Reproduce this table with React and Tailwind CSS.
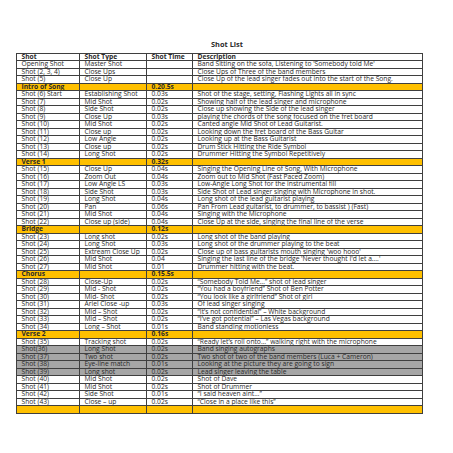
const rows = [
  ["Opening Shot", "Master Shot", "", "Band Sitting on the sofa, Listening to 'Somebody told Me'"],
  ["Shot (2, 3, 4)", "Close Ups", "", "Close Ups of Three of the band members"],
  ["Shot (5)", "Close Up", "", "Close Up of the lead singer fades out into the start of the Song."],
  ["Intro of Song", "", "0.20.5s", "", "section"],
  ["Shot (6) Start", "Establishing Shot", "0.03s", "Shot of the stage, setting, Flashing Lights all in sync"],
  ["Shot (7)", "Mid Shot", "0.02s", "Showing half of the lead singer and microphone"],
  ["Shot (8)", "Side Shot", "0.02s", "Close up showing the Side of the lead singer"],
  ["Shot (9)", "Close Up", "0.03s", "playing the chords of the song focused on the fret board"],
  ["Shot (10)", "Mid Shot", "0.02s", "Canted angle Mid Shot of Lead Guitarist."],
  ["Shot (11)", "Close up", "0.02s", "Looking down the fret board of the Bass Guitar"],
  ["Shot (12)", "Low Angle", "0.02s", "Looking up at the Bass Guitarist"],
  ["Shot (13)", "Close up", "0.02s", "Drum Stick Hitting the Ride Symbol"],
  ["Shot (14)", "Long Shot", "0.02s", "Drummer Hitting the Symbol Repetitively"],
  ["Verse 1", "", "0.32s", "", "section"],
  ["Shot (15)", "Close Up", "0.04s", "Singing the Opening Line of Song, With Microphone"],
  ["Shot (16)", "Zoom Out", "0.04s", "Zoom out to Mid Shot (Fast Paced Zoom)"],
  ["Shot (17)", "Low Angle LS", "0.03s", "Low-Angle Long Shot for the instrumental fill"],
  ["Shot (18)", "Side Shot", "0.03s", "Side Shot of Lead singer singing with Microphone in shot."],
  ["Shot (19)", "Long Shot", "0.04s", "Long shot of the lead guitarist playing"],
  ["Shot (20)", "Pan", "0.06s", "Pan From Lead guitarist, to drummer, to bassist ) (Fast)"],
  ["Shot (21)", "Mid Shot", "0.04s", "Singing with the Microphone"],
  ["Shot (22)", "Close up (side)", "0.04s", "Close Up at the side, singing the final line of the verse"],
  ["Bridge", "", "0.12s", "", "section"],
  ["Shot (23)", "Long shot", "0.02s", "Long shot of the band playing"],
  ["Shot (24)", "Long Shot", "0.03s", "Long shot of the drummer playing to the beat"],
  ["Shot (25)", "Extream Close Up", "0.02s", "Close up of bass guitarists mouth singing 'woo hooo'"],
  ["Shot (26)", "Mid Shot", "0.04", "Singing the last line of the bridge 'Never thought I'd let a....'"],
  ["Shot (27)", "Mid Shot", "0.01", "Drummer hitting with the beat."],
  ["Chorus", "", "0.15.5s", "", "section"],
  ["Shot (28)", "Close-Up", "0.02s", "\u201cSomebody Told Me\u2026\u201d shot of lead singer"],
  ["Shot (29)", "Mid - Shot", "0.02s", "\u201cYou had a boyfriend\u201d Shot of Ben Potter"],
  ["Shot (30)", "Mid- Shot", "0.02s", "\u201cYou look like a girlfriend\u201d Shot of girl"],
  ["Shot (31)", "Ariel Close -up", "0.03s", "Of lead singer singing"],
  ["Shot (32)", "Mid \u2013 Shot", "0.02s", "\u201cIt\u2019s not confidential\u201d \u2013 White background"],
  ["Shot (33)", "Mid \u2013 Shot", "0.02s", "\u201cI\u2019ve got potential\u201d \u2013 Las Vegas background"],
  ["Shot (34)", "Long \u2013 Shot", "0.01s", "Band standing motionless"],
  ["Verse 2", "", "0.16s", "", "section"],
  ["Shot (35)", "Tracking shot", "0.02s", "\u201cReady let\u2019s roll onto\u2026\u201d walking right with the microphone"],
  ["Shot(36)", "Long Shot", "0.02s", "Band singing autographs", "gray"],
  ["Shot (37)", "Two shot", "0.02s", "Two shot of two of the band members (Luca + Cameron)", "gray"],
  ["Shot (38)", "Eye-line match", "0.01s", "Looking at the picture they are going to sign", "gray"],
  ["Shot (39)", "Long shot", "0.02s", "Lead singer leaving the table", "gray"],
  ["Shot (40)", "Mid Shot", "0.02s", "Shot of Dave"],
  ["Shot (41)", "Mid Shot", "0.02s", "Shot of Drummer"],
  ["Shot (42)", "Side Shot", "0.01s", "\u201cI said heaven aint\u2026\u201d"],
  ["Shot (43)", "Close \u2013 up", "0.02s", "\u201cClose in a place like this\u201d"],
  ["", "", "", "", "section"],
];

export default function App() {
  const cell = "border border-[#3f3f3f] pl-[4.5px] h-[7.5px] p-0 leading-[6.5px] whitespace-nowrap overflow-hidden";

  return (
    <div
      className="w-[453px] h-[453px] bg-white text-[#2a2a2a] pt-[40px]"
      style={{ fontFamily: "'Open Sans', 'Noto Sans', sans-serif" }}
    >
      <div className="pl-[211px] text-[7.4px] font-bold leading-[8px] h-[12.5px]">Shot List</div>

      <table className="ml-[16px] w-[406px] border-collapse table-fixed text-[6.7px]">
        <colgroup>
          <col className="w-[63px]" />
          <col className="w-[67px]" />
          <col className="w-[46px]" />
          <col className="w-[230px]" />
        </colgroup>
        <tbody>
          <tr className="font-bold">
            <td className={cell}>Shot</td>
            <td className={cell}>Shot Type</td>
            <td className={cell}>Shot Time</td>
            <td className={cell}>Description</td>
          </tr>
          {rows.map((r, i) => {
            const kind = r[4];
            const bg =
              kind === "section"
                ? "bg-[#ffc000] font-bold"
                : kind === "gray"
                ? "bg-[#a6a6a6]"
                : "bg-white";
            return (
              <tr key={i} className={bg}>
                <td className={cell}>{r[0]}</td>
                <td className={cell}>{r[1]}</td>
                <td className={cell}>{r[2]}</td>
                <td className={cell}>{r[3]}</td>
              </tr>
            );
          })}
        </tbody>
      </table>
    </div>
  );
}
